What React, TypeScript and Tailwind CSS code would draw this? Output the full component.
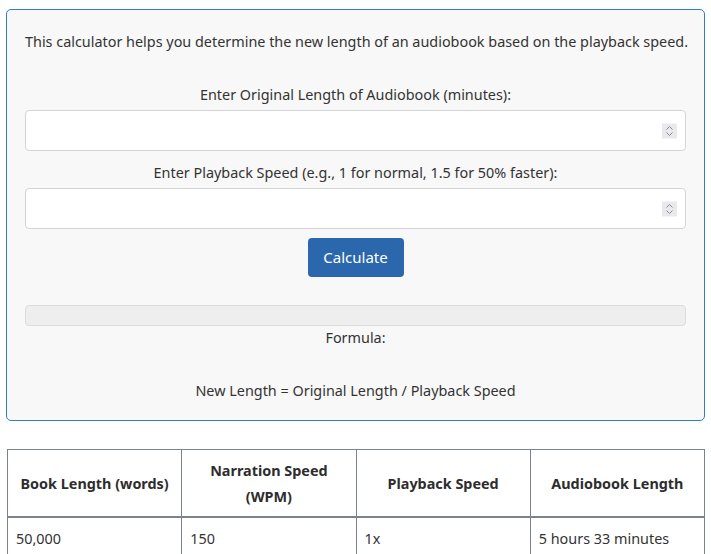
import React from "react";

function Spinner() {
  return (
    <div className="absolute right-[8px] top-1/2 -translate-y-1/2 w-[15px] h-[15px] bg-[#e9e9ed] flex items-center justify-center">
      <svg width="9" height="13" viewBox="0 0 9 13" fill="none" stroke="#8a8a8a" strokeWidth="1">
        <path d="M1.5 5 L4.5 2 L7.5 5" />
        <path d="M1.5 8 L4.5 11 L7.5 8" />
      </svg>
    </div>
  );
}

function NumInput() {
  return (
    <div className="relative h-[41px] w-full rounded-[4px] border border-[#d4d4d4] bg-white">
      <Spinner />
    </div>
  );
}

export default function App() {
  const font = { fontFamily: '"Noto Sans", "Open Sans", sans-serif' };
  return (
    <div className="bg-white w-[711px] h-[554px] overflow-hidden text-[#333] text-[14.4px]" style={font}>
      <div className="pt-[9px] pl-[6px]">
        <div className="w-[699px] rounded-[5px] border border-[#2f7ccb] bg-[#f8f8f8] px-[18px] pt-[21px] pb-[18px] text-center">
          <div className="h-[22px] leading-[22px] whitespace-nowrap">
            This calculator helps you determine the new length of an audiobook based on the playback speed.
          </div>
          <div className="mt-[31px] h-[22px] leading-[22px]">Enter Original Length of Audiobook (minutes):</div>
          <div className="mt-[4px]">
            <NumInput />
          </div>
          <div className="mt-[11px] h-[22px] leading-[22px]">Enter Playback Speed (e.g., 1 for normal, 1.5 for 50% faster):</div>
          <div className="mt-[4px]">
            <NumInput />
          </div>
          <div className="mt-[9px] flex justify-center">
            <button className="h-[39px] w-[96px] rounded-[4px] bg-[#2b67ad] text-white text-[15px]">Calculate</button>
          </div>
          <div className="mt-[28px] h-[21px] rounded-[4px] border border-[#dcdcdc] bg-[#eeeeee]" />
          <div className="mt-[1px] h-[22px] leading-[22px]">Formula:</div>
          <div className="mt-[31px] h-[22px] leading-[22px]">New Length = Original Length / Playback Speed</div>
        </div>
      </div>
      <div className="mt-[28px] pl-[7px]">
        <table className="w-[698px] table-fixed border-collapse">
          <thead>
            <tr className="h-[67px]">
              <th className="border border-[#7a8290] border-b-2 px-[6px] pt-[2px] font-bold leading-[26px] text-[#2d2d2d] whitespace-nowrap">Book Length (words)</th>
              <th className="border border-[#7a8290] border-b-2 px-[24px] pt-[2px] font-bold leading-[26px] text-[#2d2d2d]">Narration Speed (WPM)</th>
              <th className="border border-[#7a8290] border-b-2 px-[10px] pt-[2px] font-bold leading-[26px] text-[#2d2d2d]">Playback Speed</th>
              <th className="border border-[#7a8290] border-b-2 px-[10px] pt-[2px] font-bold leading-[26px] text-[#2d2d2d]">Audiobook Length</th>
            </tr>
          </thead>
          <tbody>
            <tr className="h-[42px]">
              <td className="border border-[#7a8290] px-[8px] pt-[2px] text-left">50,000</td>
              <td className="border border-[#7a8290] px-[8px] pt-[2px] text-left">150</td>
              <td className="border border-[#7a8290] px-[8px] pt-[2px] text-left">1x</td>
              <td className="border border-[#7a8290] px-[8px] pt-[2px] text-left">5 hours 33 minutes</td>
            </tr>
          </tbody>
        </table>
      </div>
    </div>
  );
}
